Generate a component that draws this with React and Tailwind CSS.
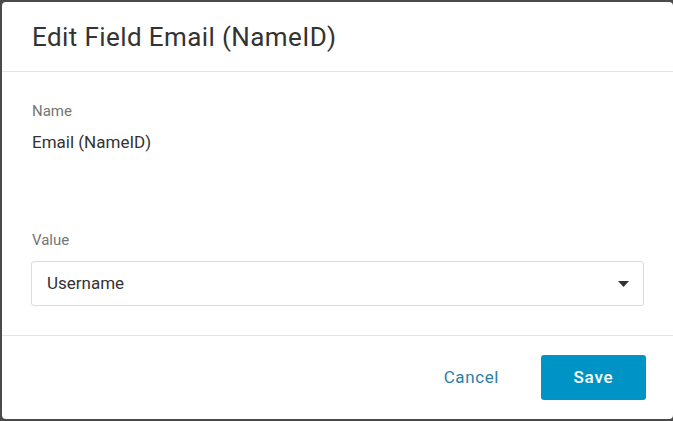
import React from 'react';

const App = () => (
  <div className="w-[673px] h-[421px] bg-[#4a4a4a] pt-[2px] pl-[2px] overflow-hidden" style={{ fontFamily: 'Roboto, "Liberation Sans", sans-serif' }}>
    <div className="w-[671px] h-[417px] bg-white rounded-[4px] flex flex-col">
      {/* Header */}
      <div className="h-[70px] border-b border-[#e3e3e3] flex items-center pl-[30px]">
        <h1 className="text-[26px] tracking-[0.4px] text-[#333333] leading-none">Edit Field Email (NameID)</h1>
      </div>

      {/* Body */}
      <div className="px-[29px] pt-[29px] pb-[29px] border-b border-[#e3e3e3]">
        <div className="text-[15px] leading-[20px] text-[#757575] pl-px">Name</div>
        <div className="mt-[9px] text-[17px] leading-[24px] text-[#333333] pl-px">Email (NameID)</div>

        <div className="mt-[76px] text-[15px] leading-[20px] text-[#757575] pl-px">Value</div>
        <div className="mt-[11px] h-[45px] border border-[#dcdcdc] rounded-[3px] flex items-center justify-between pl-[15px] pr-[14px]">
          <span className="text-[17px] text-[#333333]">Username</span>
          <svg width="11" height="6" viewBox="0 0 11 6" className="mt-px">
            <path d="M0 0 L11 0 L5.5 6 Z" fill="#333333" />
          </svg>
        </div>
      </div>

      {/* Footer */}
      <div className="flex-1 flex items-center justify-end pr-[27px] gap-[26px]">
        <button className="px-[16px] h-[45px] text-[17px] tracking-[0.6px] text-[#2a7fa6]">Cancel</button>
        <button className="w-[105px] h-[45px] rounded-[3px] bg-[#0094c6] text-white text-[17px] font-medium tracking-[0.8px]">Save</button>
      </div>
    </div>
  </div>
);

export default App;
